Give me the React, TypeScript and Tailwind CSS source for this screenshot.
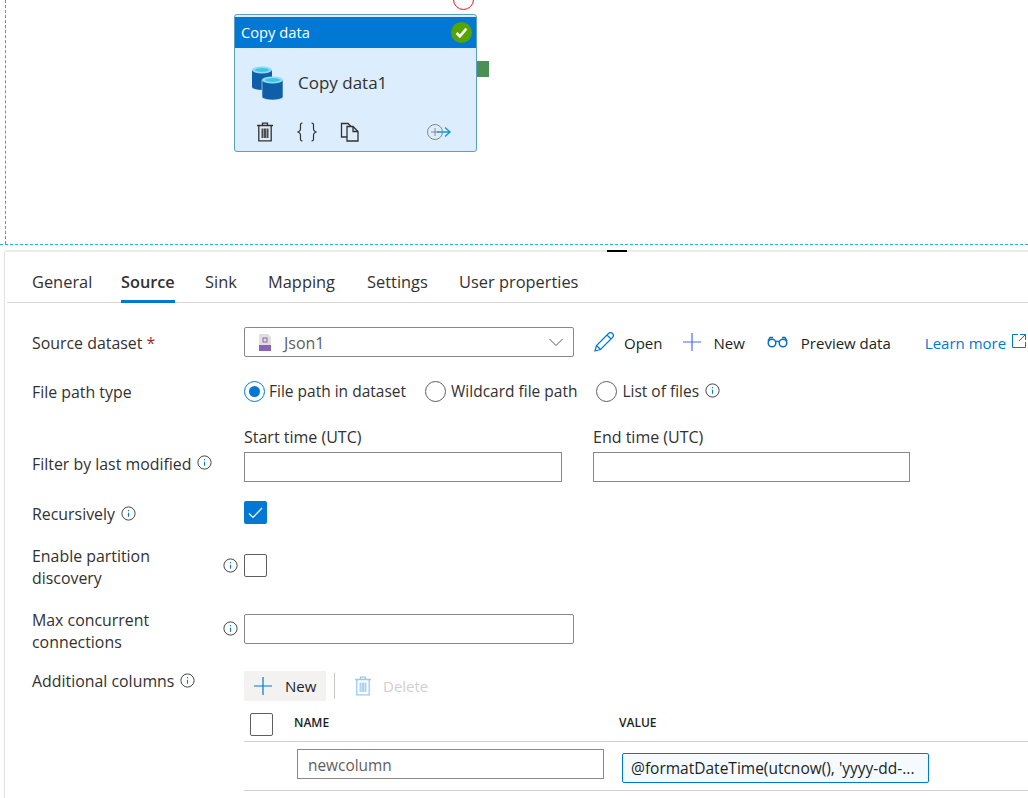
import { ReactNode } from "react";

const labelCls = "text-[15.9px] font-medium text-[#323130] leading-[22px]";
const inputCls = "h-[30px] border border-[#8a8886] bg-white";

const tabs = [
  { name: "General", cls: "w-[59px]" },
  { name: "Source", cls: "w-[54px]", active: true },
  { name: "Sink", cls: "w-[33px]" },
  { name: "Mapping", cls: "w-[69px]" },
  { name: "Settings", cls: "w-[62px]" },
  { name: "User properties", cls: "w-[119px]" },
];

function Info({ className = "" }: { className?: string }) {
  return (
    <svg width="15" height="15" viewBox="0 0 15 15" fill="none" className={className}>
      <circle cx="7.5" cy="7.5" r="6.6" stroke="#323130" strokeWidth="0.9" />
      <path d="M7.5 6.700v4M7.500 4v1.200" stroke="#0078d4" strokeWidth="1.100" />
    </svg>
  );
}

function Radio({ on, label, info }: { on?: boolean; label: string; info?: boolean }) {
  return (
    <div className="flex items-center">
      <span
        className={`flex h-[21px] w-[21px] items-center justify-center rounded-full border ${on ? "border-[#0078d4]" : "border-[#605e5c]"}`}
      >
        {on && <span className="h-[11px] w-[11px] rounded-full bg-[#0078d4]" />}
      </span>
      <span className={`${on ? "ml-[4px]" : "ml-[5px]"} text-[15.5px] text-[#323130]`}>{label}</span>
      {info && <Info className="ml-[6px] -mt-[2px]" />}
    </div>
  );
}

function Plus({ color = "#0078d4", size = 20 }: { color?: string; size?: number }) {
  return (
    <svg width={size} height={size} viewBox="0 0 20 20" fill="none">
      <path d="M10 1v18M1 10h18" stroke={color} strokeWidth="1.2" />
    </svg>
  );
}

function Trash({ color }: { color: string }) {
  return (
    <svg width="18" height="20" viewBox="0 0 18 20" fill="none" stroke={color} strokeWidth="1.3">
      <path d="M1 3.500h16M6.500 3.500V1.200h5v2.300M2.800 3.500v15.300h12.400V3.500M6.200 6.500v9.500M8.200 6.500v9.500M9.800 6.500v9.500M11.800 6.500v9.500" />
    </svg>
  );
}

function Row({ label, className, children }: { label: ReactNode; className: string; children: ReactNode }) {
  return (
    <div className={`flex pl-[27px] ${className}`}>
      <div className="w-[212px] shrink-0">{label}</div>
      {children}
    </div>
  );
}

function CopyCard() {
  return (
    <div className="absolute left-[234px] top-[14px] h-[138px] w-[243px] rounded-[3px] border border-[#5a9fbd] bg-[#dcedfd] pt-[2px]">
      <div className="flex h-[31px] items-center justify-between bg-[#0078d4] pl-[6px] pr-[4px] text-[14.7px] text-white">
        <span>Copy data</span>
        <span className="flex h-[21px] w-[21px] items-center justify-center rounded-full bg-[#57a300]">
          <svg width="13" height="13" viewBox="0 0 12 12" fill="none">
            <path d="M1.500 6.500l3 3 6-7" stroke="#fff" strokeWidth="2.400" />
          </svg>
        </span>
      </div>
      <div className="flex items-center pl-[17px] pt-[18px]">
        <svg width="32" height="36" viewBox="0 0 32 36">
          <path d="M0 4h20v17a10 3 0 0 1-20 0z" fill="#0f5ea8" />
          <ellipse cx="10" cy="4" rx="10" ry="3.400" fill="#8fdcf0" />
          <ellipse cx="10" cy="4" rx="7" ry="1.900" fill="#3ec6e8" />
          <path d="M10 14h21v17a10.500 3 0 0 1-21 0z" fill="#0f5ea8" stroke="#dcedfd" strokeWidth="0.600" />
          <ellipse cx="20.500" cy="14" rx="10.500" ry="3.400" fill="#8fdcf0" />
          <ellipse cx="20.500" cy="14" rx="7.500" ry="1.900" fill="#3ec6e8" />
        </svg>
        <span className="ml-[14px] -mt-[3px] text-[17px] text-[#323130]">Copy data1</span>
      </div>
      <div className="relative mt-[20px] flex h-[20px] items-center pl-[21px]">
        <Trash color="#323130" />
        <svg className="ml-[23px]" width="20" height="20" viewBox="0 0 20 20" fill="none" stroke="#323130" strokeWidth="1.200">
          <path d="M5.500 1C3 1 3.500 3 3.500 5.500S3.500 9 1 10c2.500 1 2.500 2 2.500 4.500S3 19 5.500 19M14.500 1c2.500 0 2 2 2 4.500s0 3.500 2.500 4.500c-2.500 1-2.500 2-2.500 4.500s.5 4.500-2 4.500" />
        </svg>
        <svg className="ml-[23px]" width="20" height="20" viewBox="0 0 20 20" fill="none" stroke="#323130" strokeWidth="1.300">
          <path d="M7 15H1.500V1.500h6.500l3 3" />
          <path d="M7 4.500h6l5 5v9.500H7zM13 4.500v5h5" fill="#dcedfd" />
        </svg>
        <svg className="absolute left-[191px] top-[1px]" width="26" height="18" viewBox="0 0 26 18" fill="none">
          <circle cx="9" cy="9" r="7.500" stroke="#8a8886" strokeWidth="1" />
          <path d="M5 9h8M9 5v8" stroke="#8a8886" strokeWidth="1" />
          <path d="M11 9h13M19 4.500l5 4.500-5 4.500" stroke="#1a9bd0" strokeWidth="1.500" />
        </svg>
      </div>
      <div className="absolute left-[242px] top-[46px] h-[16px] w-[12px] bg-[#4a8f53]" />
    </div>
  );
}

function Form() {
  return (
    <div className="pt-[24px]">
      <Row label={<span className={`${labelCls} block pt-[1px] leading-[30px]`}>Source dataset <span className="text-[#a4262c]">*</span></span>} className="h-[30px] items-center">
        <div className={`${inputCls} flex w-[330px] items-center rounded-[2px] pl-[13px] pr-[9px]`}>
          <svg width="14" height="17" viewBox="0 0 14 17">
            <path d="M1 0h9l3 3v9H1z" fill="#e1dfdd" />
            <rect x="1" y="11" width="12" height="6" fill="#8764b8" />
            <rect x="5" y="4" width="4" height="4" fill="none" stroke="#8764b8" />
          </svg>
          <span className="ml-[12px] pt-[1px] text-[16px] text-[#605e5c]">Json1</span>
          <svg className="ml-auto" width="16" height="16" viewBox="0 0 16 16" fill="none">
            <path d="M1.500 5l6.500 6.500L14.500 5" stroke="#605e5c" strokeWidth="1" />
          </svg>
        </div>
        <div className="ml-[20px] flex items-center text-[15px] text-[#201f1e]">
          <svg width="20" height="20" viewBox="0 0 20 20" fill="none" stroke="#0078d4" strokeWidth="1.200">
            <path d="M1 19l1.500-5.500L14.500 1.500a2.500 2.500 0 0 1 4 4L6.500 17.500zM2.500 13.500l4 4M13 3l4 4" />
          </svg>
          <span className="ml-[10px] pt-[2px]">Open</span>
          <span className="ml-[20px]"><Plus color="#4f6bed" /></span>
          <span className="ml-[11px] pt-[2px]">New</span>
          <svg className="ml-[22px]" width="21" height="12" viewBox="0 0 21 12" fill="none" stroke="#0f6cbd" strokeWidth="1.500">
            <circle cx="5" cy="7" r="3.800" />
            <circle cx="16" cy="7" r="3.800" />
            <path d="M8.500 6c1-1 3-1 4 0M1 5l2-3.500h3M20 5l-2-3.500h-3" />
          </svg>
          <span className="ml-[13px] pt-[2px]">Preview data</span>
          <span className="ml-[34px] pt-[2px] text-[#0078d4]">Learn more</span>
          <svg className="ml-[6px] -mt-[3px]" width="14" height="14" viewBox="0 0 14 14" fill="none" stroke="#0078d4" strokeWidth="1">
            <path d="M6 .500H.500v13h13V8M8 .500h5.500V6M13.500 .500L7 7" />
          </svg>
        </div>
      </Row>

      <Row label={<span className={`${labelCls} leading-[21px]`}>File path type</span>} className="mt-[24px] h-[21px] items-center">
        <div className="flex gap-[19px]">
          <Radio on label="File path in dataset" />
          <Radio label="Wildcard file path" />
          <Radio label="List of files" info />
        </div>
      </Row>

      <Row
        label={
          <div className="flex h-full items-end pb-[7px]">
            <span className={labelCls}>Filter by last modified</span>
            <Info className="ml-[6px] mb-[5px]" />
          </div>
        }
        className="mt-[25px]"
      >
        <div className="w-[318px]">
          <div className="h-[20px] text-[16px] font-medium leading-[20px]">Start time (UTC)</div>
          <div className={`${inputCls} mt-[5px] w-full`} />
        </div>
        <div className="ml-[31px] w-[317px]">
          <div className="h-[20px] text-[16px] font-medium leading-[20px]">End time (UTC)</div>
          <div className={`${inputCls} mt-[5px] w-full`} />
        </div>
      </Row>

      <Row
        label={
          <div className="flex items-center pt-[2px]">
            <span className={labelCls}>Recursively</span>
            <Info className="ml-[6px] -mt-[2px]" />
          </div>
        }
        className="mt-[19px] h-[23px]"
      >
        <span className="flex h-[23px] w-[23px] items-center justify-center rounded-[2px] bg-[#0078d4]">
          <svg width="15" height="12" viewBox="0 0 15 12" fill="none">
            <path d="M1 6.500l4 4L14 1" stroke="#fff" strokeWidth="1.200" />
          </svg>
        </span>
      </Row>

      <Row
        label={
          <div className="relative w-[212px]">
            <div className={labelCls}>Enable partition<br />discovery</div>
            <Info className="absolute left-[191px] top-[13px]" />
          </div>
        }
        className="mt-[21px] h-[44px]"
      >
        <span className="mt-[9px] h-[23px] w-[23px] rounded-[2px] border border-[#605e5c]" />
      </Row>

      <Row
        label={
          <div className="relative w-[212px]">
            <div className={labelCls}>Max concurrent<br />connections</div>
            <Info className="absolute left-[191px] top-[12px]" />
          </div>
        }
        className="mt-[20px] h-[44px]"
      >
        <div className={`${inputCls} mt-[5px] w-[330px] rounded-[2px]`} />
      </Row>

      <Row
        label={
          <div className="-mt-[1px] flex items-center">
            <span className={labelCls}>Additional columns</span>
            <Info className="ml-[6px] -mt-[2px]" />
          </div>
        }
        className="mt-[18px]"
      >
        <div className="flex-1">
          <div className="flex h-[30px] items-center">
            <div className="flex h-[30px] w-[82px] items-center bg-[#f3f2f1] pl-[9px] text-[15px] text-[#201f1e]">
              <Plus />
              <span className="ml-[12px] pt-[1px]">New</span>
            </div>
            <div className="ml-[8px] h-[26px] w-px bg-[#c8c6c4]" />
            <span className="ml-[19px]"><Trash color="#9cc9ee" /></span>
            <span className="ml-[11px] pt-[1px] text-[15px] text-[#d2d0ce]">Delete</span>
          </div>
          <div className="mt-[12px] flex h-[29px] items-start border-b border-b-[#d2d0ce] pl-[6px]">
            <span className="h-[23px] w-[23px] rounded-[2px] border border-[#605e5c]" />
            <span className="ml-[21px] mt-[1px] w-[325px] text-[12px] font-semibold text-[#201f1e]">NAME</span>
            <span className="mt-[1px] text-[12px] font-semibold text-[#201f1e]">VALUE</span>
          </div>
          <div className="flex h-[49px] border-b border-b-[#d2d0ce] pl-[53px] pt-[7px]">
            <div className="h-[30px] w-[307px] border border-[#8a8886] pl-[10px] text-[15.4px] leading-[32px] text-[#605e5c]">newcolumn</div>
            <div className="ml-[18px] mt-[4px] h-[30px] w-[307px] whitespace-nowrap rounded-[2px] border border-[#0078d4] bg-[#f5fafe] pl-[8px] text-[15.5px] leading-[28px] text-[#201f1e]">
              @formatDateTime(utcnow(), 'yyyy-dd-...
            </div>
          </div>
        </div>
      </Row>
    </div>
  );
}

export default function App() {
  return (
    <div className="h-[798px] w-[1028px] overflow-hidden bg-white font-['Open_Sans','Noto_Sans',sans-serif] text-[#323130]">
      {/* canvas */}
      <div className="relative h-[245px] border-b border-dashed border-b-[#1fb6d9]">
        <div className="ml-[5px] h-full border-l border-dashed border-l-[#8a8886]" />
        <div className="absolute left-[453px] top-[-11px] h-[21px] w-[21px] rounded-full border border-[#e81123] bg-white" />
        <CopyCard />
      </div>

      {/* splitter */}
      <div className="relative ml-[5px] mt-[5px] h-[2px] bg-[#edebe9]">
        <div className="absolute left-[602px] top-0 h-[2px] w-[20px] bg-black" />
      </div>

      {/* panel */}
      <div className="ml-[4px] h-[546px] border-l border-l-[#e1dfdd]">
        <div className="ml-[2px] flex h-[51px] items-end gap-[30px] border-b border-b-[#d8d6d4] pl-[25px] text-[16.4px]">
          {tabs.map((t) =>
            t.active ? (
              <span key={t.name} className={`${t.cls} -mb-[1px] whitespace-nowrap border-b-[3px] border-b-[#0078d4] pb-[6px] text-[16.3px] font-semibold text-[#323130]`}>
                {t.name}
              </span>
            ) : (
              <span key={t.name} className={`${t.cls} whitespace-nowrap pb-[7px] text-[#323130]`}>
                {t.name}
              </span>
            ),
          )}
        </div>
        <Form />
      </div>
    </div>
  );
}
